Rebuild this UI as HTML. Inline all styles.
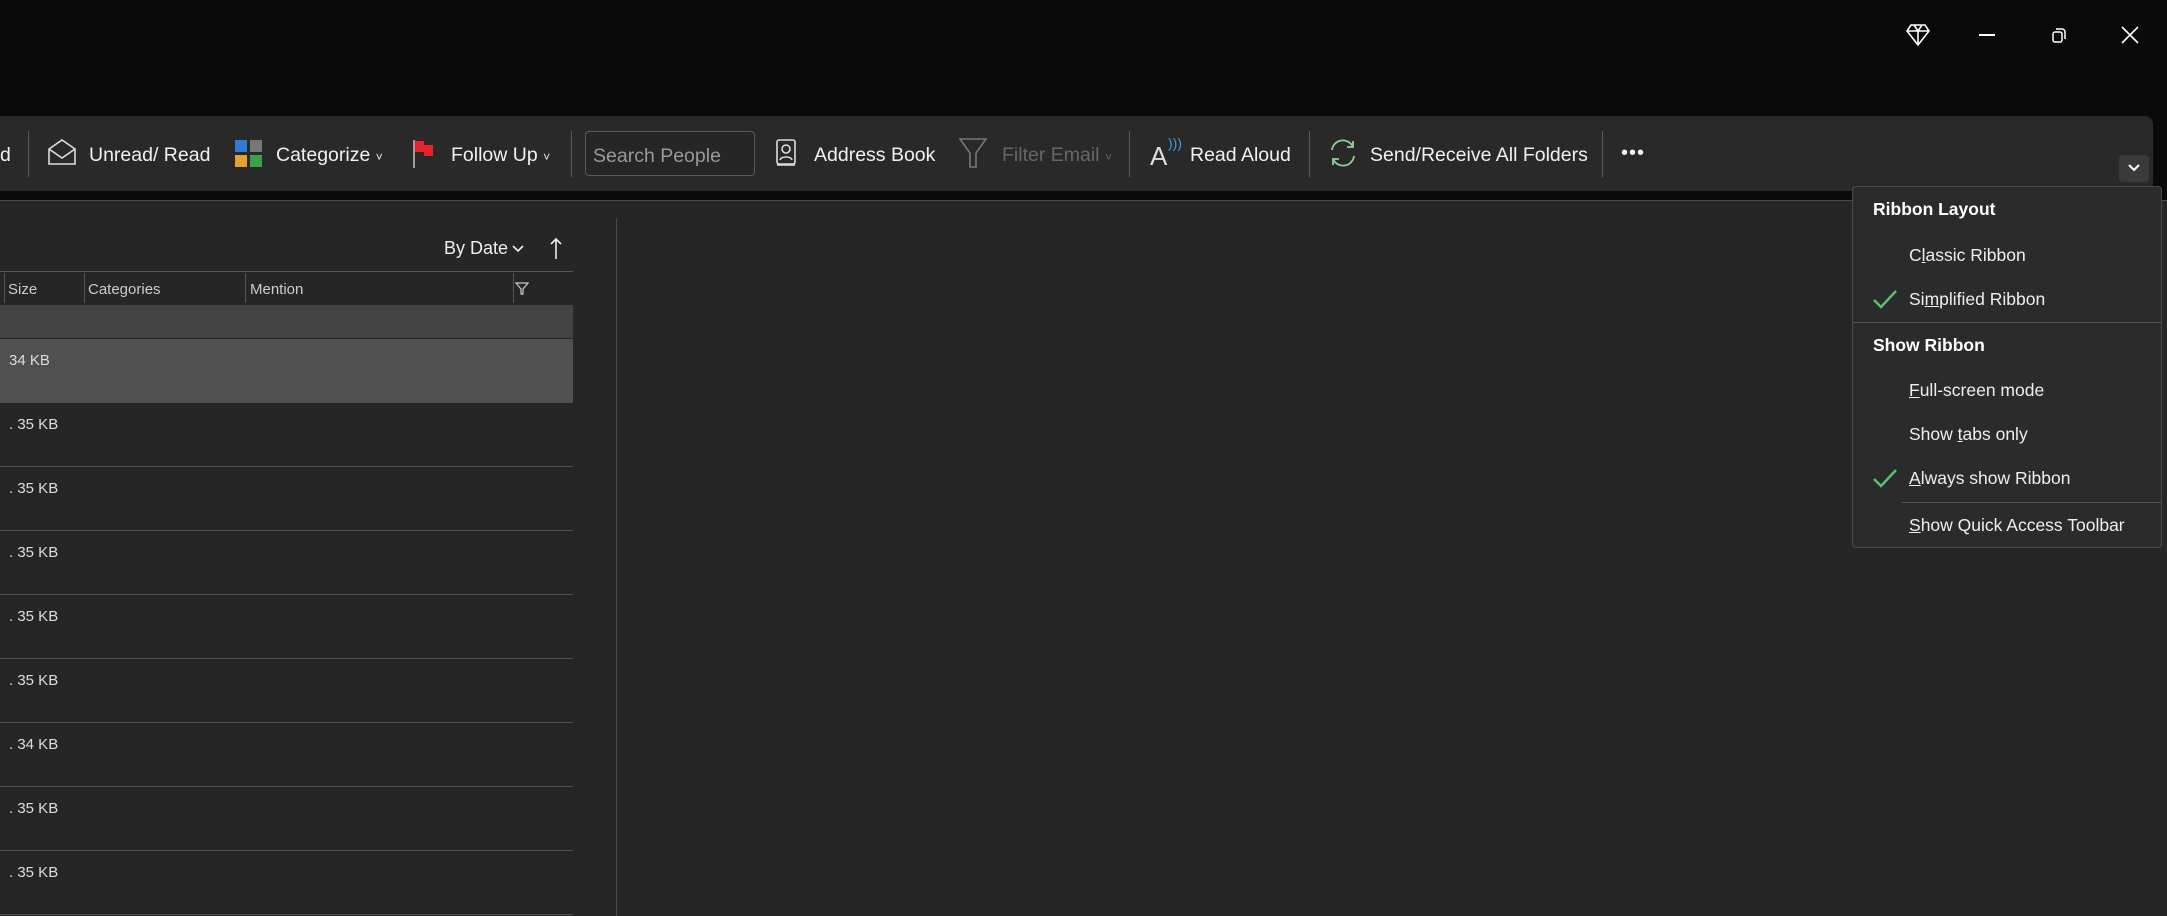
<!DOCTYPE html>
<html><head><meta charset="utf-8"><style>
*{margin:0;padding:0;box-sizing:border-box}
body{width:2167px;height:916px;background:#0a0a0a;overflow:hidden;position:relative;font-family:"Liberation Sans",sans-serif;color:#fff}
.a{position:absolute}
.rib{left:0;top:116px;width:2153px;height:75px;background:#292929;border-radius:0 8px 8px 0}
.t{position:absolute;font-size:19.5px;color:#f0f0f0;top:144px;white-space:nowrap}
.sep{position:absolute;top:131px;width:1px;height:46px;background:#5a5a5a}
.main{left:0;top:200px;width:2167px;height:716px;background:#262626;border-top:1px solid #4a4a4a}
.hdr{font-size:15px;color:#ccc;top:281px;position:absolute}
.cd{position:absolute;top:273px;width:1px;height:30px;background:#555}
.row{position:absolute;left:0;width:573px;height:1px;background:#4d4d4d}
.kb{position:absolute;left:9px;font-size:15px;color:#ddd}
.menu{left:1852px;top:186px;width:310px;height:362px;background:#2b2b2b;border:1px solid #4a4a4a;border-radius:4px}
.mi{position:absolute;font-size:17.5px;color:#eee;white-space:nowrap}
.mh{position:absolute;font-size:17.5px;font-weight:bold;color:#fff;left:20px}
u{text-decoration:underline}
</style></head><body>
<svg class="a" style="left:1905px;top:22px" width="26" height="26" viewBox="0 0 26 26" fill="none" stroke="#fff" stroke-width="1.6"><path d="M6 3h14l4 6-11 14L2 9z M2 9h22 M9 3l4 6 4-6 M13 9v14"/></svg>
<div class="a" style="left:1979px;top:34px;width:16px;height:1.5px;background:#fff"></div>
<svg class="a" style="left:2050px;top:26px" width="18" height="18" viewBox="0 0 18 18" fill="none" stroke="#fff" stroke-width="1.5"><rect x="3" y="6" width="9" height="10" rx="2"/><path d="M6 3h6a3 3 0 0 1 3 3v7"/></svg>
<svg class="a" style="left:2121px;top:26px" width="18" height="18" viewBox="0 0 18 18" stroke="#fff" stroke-width="1.6"><path d="M1 1l16 16M17 1L1 17"/></svg>

<div class="a rib"></div>
<div class="t" style="left:0">d</div>
<div class="sep" style="left:28px"></div>
<svg class="a" style="left:47px;top:138px" width="30" height="28" viewBox="0 0 30 28" fill="none" stroke="#ddd" stroke-width="1.6"><path d="M2 11v15h26V11L15 2z M2 11l13 9 13-9"/></svg>
<div class="t" style="left:89px">Unread/ Read</div>
<div class="a" style="left:235px;top:140px;width:12px;height:12px;background:#2f7bd6"></div>
<div class="a" style="left:250px;top:140px;width:12px;height:12px;background:#777"></div>
<div class="a" style="left:235px;top:155px;width:12px;height:12px;background:#e8a030"></div>
<div class="a" style="left:250px;top:155px;width:12px;height:12px;background:#3aa34a"></div>
<div class="t" style="left:276px">Categorize <span style="font-size:12px">˅</span></div>
<svg class="a" style="left:412px;top:139px" width="24" height="30" viewBox="0 0 24 30"><path d="M2 1v28" stroke="#bbb" stroke-width="1.6"/><path d="M3 2h9v4h9v11h-9v-4H3z" fill="#e8212b"/></svg>
<div class="t" style="left:451px">Follow Up <span style="font-size:12px">˅</span></div>
<div class="sep" style="left:571px"></div>
<div class="a" style="left:585px;top:131px;width:170px;height:45px;border:1px solid #5a5a5a;border-radius:4px;background:#262626"></div>
<div class="t" style="left:593px;top:145px;color:#999">Search People</div>
<svg class="a" style="left:775px;top:138px" width="22" height="30" viewBox="0 0 22 30" fill="none" stroke="#ddd" stroke-width="1.6"><rect x="2" y="2" width="18" height="24" rx="2"/><circle cx="11" cy="11" r="4"/><path d="M5 22c1-4 11-4 12 0 M2 27h18"/></svg>
<div class="t" style="left:814px">Address Book</div>
<svg class="a" style="left:958px;top:137px" width="30" height="32" viewBox="0 0 30 32" fill="none" stroke="#777" stroke-width="1.6"><path d="M2 2h26L18 16v14h-6V16z"/></svg>
<div class="t" style="left:1002px;color:#666">Filter Email <span style="font-size:12px">˅</span></div>
<div class="sep" style="left:1129px"></div>
<div class="t" style="left:1150px;top:141px;font-size:26px;color:#ddd">A</div>
<div class="t" style="left:1168px;top:135px;font-size:14px;color:#3d9be0">)))</div>
<div class="t" style="left:1190px">Read Aloud</div>
<div class="sep" style="left:1309px"></div>
<svg class="a" style="left:1328px;top:138px" width="30" height="30" viewBox="0 0 30 30" fill="none" stroke="#8fcf9a" stroke-width="1.8"><path d="M4 12A11 11 0 0 1 25 9 M26 18A11 11 0 0 1 5 21 M25 3v6h-6 M5 27v-6h6"/></svg>
<div class="t" style="left:1370px">Send/Receive All Folders</div>
<div class="sep" style="left:1602px"></div>
<div class="t" style="left:1621px;top:142px;font-size:20px;letter-spacing:1px">•••</div>
<div class="a" style="left:2119px;top:155px;width:30px;height:27px;background:#3a3a3a;border-radius:4px"></div>
<svg class="a" style="left:2127px;top:163px" width="14" height="10" viewBox="0 0 14 10" fill="none" stroke="#fff" stroke-width="2"><path d="M2 2l5 5 5-5"/></svg>

<div class="a main"></div>
<div class="a" style="left:616px;top:218px;width:1px;height:698px;background:#4a4a4a"></div>
<div class="a" style="left:444px;top:238px;font-size:18px;color:#eee">By Date</div>
<svg class="a" style="left:511px;top:244px" width="14" height="10" viewBox="0 0 14 10" fill="none" stroke="#eee" stroke-width="1.6"><path d="M2 2l5 5 5-5"/></svg>
<svg class="a" style="left:549px;top:237px" width="14" height="24" viewBox="0 0 14 24" fill="none" stroke="#eee" stroke-width="1.6"><path d="M7 22V2M2 7l5-5 5 5"/></svg>
<div class="a" style="left:0;top:271px;width:573px;height:1px;background:#555"></div>
<div class="cd" style="left:4px"></div><div class="cd" style="left:84px"></div><div class="cd" style="left:245px"></div><div class="cd" style="left:513px"></div>
<div class="hdr" style="left:8px">Size</div>
<div class="hdr" style="left:88px">Categories</div>
<div class="hdr" style="left:250px">Mention</div>
<svg class="a" style="left:515px;top:281px" width="14" height="14" viewBox="0 0 14 14" fill="none" stroke="#ccc" stroke-width="1.2"><path d="M1 2h12L8 8v5H6V8z"/></svg>
<div class="a" style="left:0;top:305px;width:573px;height:33px;background:#434343"></div>
<div class="a" style="left:0;top:339px;width:573px;height:64px;background:#505050"></div>
<div class="kb" style="top:352px">34 KB</div>
<div class="kb" style="top:416px">. 35 KB</div><div class="row" style="top:466px"></div>
<div class="kb" style="top:480px">. 35 KB</div><div class="row" style="top:530px"></div>
<div class="kb" style="top:544px">. 35 KB</div><div class="row" style="top:594px"></div>
<div class="kb" style="top:608px">. 35 KB</div><div class="row" style="top:658px"></div>
<div class="kb" style="top:672px">. 35 KB</div><div class="row" style="top:722px"></div>
<div class="kb" style="top:736px">. 34 KB</div><div class="row" style="top:786px"></div>
<div class="kb" style="top:800px">. 35 KB</div><div class="row" style="top:850px"></div>
<div class="kb" style="top:864px">. 35 KB</div><div class="row" style="top:914px"></div>

<div class="a menu">
<div class="mh" style="top:12px">Ribbon Layout</div>
<div class="mi" style="left:56px;top:58px">C<u>l</u>assic Ribbon</div>
<svg class="a" style="left:19px;top:102px" width="26" height="20" viewBox="0 0 26 20" fill="none" stroke="#5cc16e" stroke-width="2.4"><path d="M2 11l7 7L24 2"/></svg>
<div class="mi" style="left:56px;top:102px">Si<u>m</u>plified Ribbon</div>
<div class="a" style="left:0;top:135px;width:308px;height:1px;background:#555"></div>
<div class="mh" style="top:148px">Show Ribbon</div>
<div class="mi" style="left:56px;top:193px"><u>F</u>ull-screen mode</div>
<div class="mi" style="left:56px;top:237px">Show <u>t</u>abs only</div>
<svg class="a" style="left:19px;top:281px" width="26" height="20" viewBox="0 0 26 20" fill="none" stroke="#5cc16e" stroke-width="2.4"><path d="M2 11l7 7L24 2"/></svg>
<div class="mi" style="left:56px;top:281px"><u>A</u>lways show Ribbon</div>
<div class="a" style="left:49px;top:315px;width:259px;height:1px;background:#555"></div>
<div class="mi" style="left:56px;top:328px"><u>S</u>how Quick Access Toolbar</div>
</div>
</body></html>
